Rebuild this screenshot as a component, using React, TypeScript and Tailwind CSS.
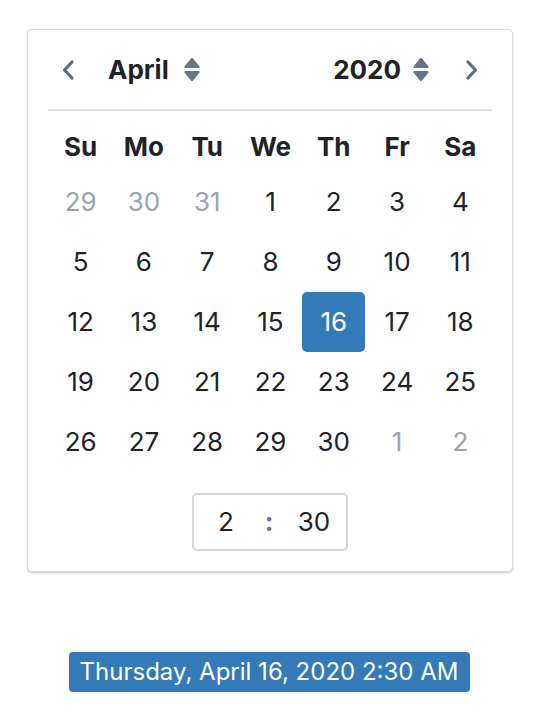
import React from "react";

const weekdays = ["Su", "Mo", "Tu", "We", "Th", "Fr", "Sa"];
const days: { d: number; muted?: boolean; sel?: boolean }[] = [
  { d: 29, muted: true }, { d: 30, muted: true }, { d: 31, muted: true },
  ...Array.from({ length: 30 }, (_, i) => ({ d: i + 1, sel: i + 1 === 16 })),
  { d: 1, muted: true }, { d: 2, muted: true },
];

function ChevronLeft() {
  return (
    <svg width="14" height="22" viewBox="0 0 14 22">
      <polyline points="11,3 3.5,11 11,19" fill="none" stroke="#5f6d7d" strokeWidth="3.2" strokeLinecap="round" strokeLinejoin="round" />
    </svg>
  );
}
function ChevronRight() {
  return (
    <svg width="14" height="22" viewBox="0 0 14 22">
      <polyline points="3,3 10.5,11 3,19" fill="none" stroke="#5f6d7d" strokeWidth="3.2" strokeLinecap="round" strokeLinejoin="round" />
    </svg>
  );
}
function UpDown() {
  return (
    <svg width="16" height="26" viewBox="0 0 16 26">
      <polygon points="8,2 14.5,10 1.5,10" fill="#66768a" stroke="#66768a" strokeWidth="2.2" strokeLinejoin="round" />
      <polygon points="1.5,15 14.5,15 8,23" fill="#66768a" stroke="#66768a" strokeWidth="2.2" strokeLinejoin="round" />
    </svg>
  );
}

export default function App() {
  return (
    <div className="min-h-[716px] bg-white" style={{ fontFamily: "Inter, 'Noto Sans', sans-serif" }}>
      <div className="pt-[29px] pl-[27px]">
        <div className="w-[486px] rounded-[5px] border border-[#dcdcdc] bg-white px-[20px] pt-[19px] pb-[20px] shadow-[0_1px_2px_rgba(0,0,0,0.22)]">
          <div className="flex h-[42px] items-center text-[#1e2329]">
            <div className="ml-[13px] flex w-[14px] items-center"><ChevronLeft /></div>
            <div className="ml-[33px] flex items-center">
              <span className="text-[26px] font-bold leading-none">April</span>
              <span className="ml-[15px] flex items-center"><UpDown /></span>
            </div>
            <div className="ml-auto flex items-center">
              <span className="text-[26px] font-bold leading-none">2020</span>
              <span className="ml-[12px] flex items-center"><UpDown /></span>
            </div>
            <div className="ml-[36px] mr-[13px] flex w-[14px] items-center"><ChevronRight /></div>
          </div>
          <div className="mt-[18px] h-[2px] bg-[#dedede]" />
          <div className="mt-[11px] grid h-[50px] grid-cols-7 items-center pl-[1px]">
            {weekdays.map((w) => (
              <div key={w} className="text-center text-[26px] font-bold leading-none text-[#1e2329]">{w}</div>
            ))}
          </div>
          <div className="grid grid-cols-7 pl-[1px]">
            {days.map((x, i) => (
              <div key={i} className="flex h-[60px] items-center justify-center">
                <div
                  className={
                    "flex h-[60px] w-full items-center justify-center rounded-[5px] text-[26px] leading-none " +
                    (x.sel ? "bg-[#337ab7] text-white" : x.muted ? "text-[#9aa3ad]" : "text-[#1e2329]")
                  }
                >
                  {x.d}
                </div>
              </div>
            ))}
          </div>
          <div className="mt-[21px] flex justify-center">
            <div className="flex h-[58px] w-[156px] items-center rounded-[5px] border-2 border-[#d6d6d6] pl-[12px] text-[26px] leading-none text-[#1e2329]">
              <span className="w-[40px] text-center">2</span>
              <span className="w-[46px] text-center text-[26px] font-bold text-[#66768a]">:</span>
              <span className="w-[44px] text-center">30</span>
            </div>
          </div>
        </div>
      </div>
      <div className="mt-[80px] flex justify-center pr-[12px]">
        <div className="flex h-[40px] w-[401px] items-center justify-center rounded-[4px] bg-[#337ab7] text-[24px] leading-none text-white">
          Thursday, April 16, 2020 2:30 AM
        </div>
      </div>
    </div>
  );
}
